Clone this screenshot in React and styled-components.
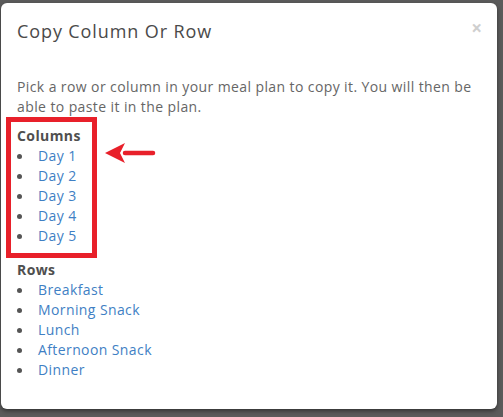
import React from 'react'
import styled, { createGlobalStyle } from 'styled-components'

const Global = createGlobalStyle`
  html, body {
    margin: 0;
    padding: 0;
    background: #5b5b5b;
    font-family: 'Open Sans', 'DejaVu Sans', sans-serif;
  }
`
const Page = styled.div`
  width: 503px;
  height: 417px;
  padding: 3px 0 0 1px;
  box-sizing: border-box;
  overflow: hidden;
`
const Modal = styled.div`
  width: 496px;
  background: #fff;
  border-radius: 6px;
  box-shadow: 0 2px 4px rgba(0, 0, 0, 0.45);
  display: flex;
  flex-direction: column;
`
const Header = styled.div`
  display: flex;
  justify-content: space-between;
  align-items: center;
  padding: 15px 15px 15px 16px;
`
const Title = styled.h4`
  margin: 0;
  font-size: 18px;
  line-height: 26px;
  font-weight: 400;
  letter-spacing: 0.9px;
  color: #4a4a4a;
`
const Close = styled.span`
  font-size: 19px;
  font-weight: 700;
  line-height: 1;
  color: #cfcfcf;
  margin-top: -6px;
`
const Body = styled.div`
  padding: 18px 16px 29px 16px;
  letter-spacing: 0.4px;
`
const Intro = styled.p`
  margin: 0;
  font-size: 14px;
  line-height: 20px;
  color: #666;
`
const Callout = styled.div`
  display: flex;
  align-items: flex-start;
  gap: 6px;
`
const Highlight = styled.div`
  margin-left: -11px;
  width: 75px;
  border: 5px solid #e8202a;
  padding: 4px 0 7px 6px;
`
const Arrow = styled.svg`
  margin-top: 25px;
  width: 54px;
  height: 22px;
`
const Section = styled.div`
  padding-top: ${p => p.$top || 0}px;
`
const Heading = styled.div`
  font-size: 14px;
  line-height: 20px;
  font-weight: 700;
  color: #4f4f4f;
`
const List = styled.ul`
  margin: 0;
  padding: 0;
  list-style: none;
`
const Item = styled.li`
  display: flex;
  align-items: center;
  gap: 16px;
  font-size: 14px;
  line-height: 20px;
  &::before {
    content: '';
    width: 5px;
    height: 5px;
    border-radius: 50%;
    background: #555;
  }
`
const Link = styled.a`
  color: #3f7fc4;
  text-decoration: none;
`

const days = ['Day 1', 'Day 2', 'Day 3', 'Day 4', 'Day 5']
const meals = ['Breakfast', 'Morning Snack', 'Lunch', 'Afternoon Snack', 'Dinner']

const Options = ({ title, items }) => (
  <>
    <Heading>{title}</Heading>
    <List>
      {items.map(i => (
        <Item key={i}><Link href="#">{i}</Link></Item>
      ))}
    </List>
  </>
)

const App = () => {
  return (
    <Page>
      <Global />
      <Modal>
        <Header>
          <Title>Copy Column Or Row</Title>
          <Close>×</Close>
        </Header>
        <Body>
          <Intro>
            Pick a row or column in your meal plan to copy it. You will then be able to paste it in the plan.
          </Intro>
          <Callout>
            <Highlight>
              <Options title="Columns" items={days} />
            </Highlight>
            <Arrow viewBox="0 0 54 22">
              <path d="M22 11 H50" stroke="#e8202a" strokeWidth="4.5" strokeLinecap="round" />
              <path d="M2 11 L22 1 L17 11 L22 21 Z" fill="#e8202a" />
            </Arrow>
          </Callout>
          <Section $top={2}>
            <Options title="Rows" items={meals} />
          </Section>
        </Body>
      </Modal>
    </Page>
  )
}

export default App
